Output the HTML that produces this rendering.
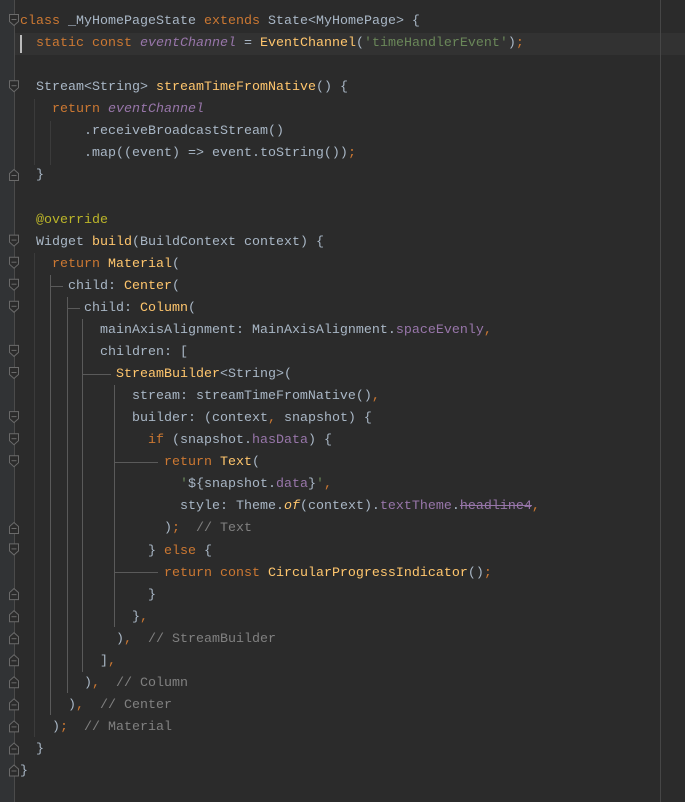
<!DOCTYPE html>
<html><head><meta charset="utf-8"><style>
html,body{margin:0;padding:0;}
body{width:685px;height:802px;background:#2b2b2b;position:relative;overflow:hidden;font-family:"Liberation Mono",monospace;font-size:13.33px;color:#a9b7c6;}
#gut{position:absolute;left:0;top:0;width:14px;height:802px;background:#313335;}
#sep{position:absolute;left:14px;top:0;width:1px;height:802px;background:#4b4b4b;}
#cur{position:absolute;left:15px;top:33px;width:670px;height:22px;background:#323232;}
#caret{position:absolute;left:20px;top:35px;width:2px;height:18px;background:#bbbbbb;}
#margin{position:absolute;left:660px;top:0;width:1px;height:802px;background:#464646;}
pre{position:absolute;left:20px;top:11px;margin:0;font:inherit;line-height:22.06px;white-space:pre;}
.k{color:#cc7832}.f{color:#ffc66d}.p{color:#9876aa}.i{font-style:italic}.s{color:#6a8759}.c{color:#808080}.a{color:#bbb529}
.st{text-decoration:line-through}
.g{position:absolute;background:#5a5a5a;}
.gf{position:absolute;background:#3b3b3b;width:1px;}
svg{position:absolute;left:0;top:0;}
</style></head><body>
<div id="gut"></div><div id="sep"></div><div id="cur"></div><div id="margin"></div><div id="caret"></div>
<div class="gf" style="left:34px;top:99px;height:66px"></div>
<div class="gf" style="left:50px;top:121px;height:44px"></div>
<div class="gf" style="left:34px;top:253px;height:484px"></div>
<div class="g" style="left:50px;top:275px;width:1px;height:440px"></div>
<div class="g" style="left:50px;top:286px;width:13px;height:1px"></div>
<div class="g" style="left:67px;top:297px;width:1px;height:396px"></div>
<div class="g" style="left:67px;top:308px;width:13px;height:1px"></div>
<div class="g" style="left:82px;top:319px;width:1px;height:353px"></div>
<div class="g" style="left:82px;top:374px;width:29px;height:1px"></div>
<div class="g" style="left:114px;top:385px;width:1px;height:242px"></div>
<div class="g" style="left:114px;top:462px;width:44px;height:1px"></div>
<div class="g" style="left:114px;top:572px;width:44px;height:1px"></div>
<svg width="30" height="802" fill="#2b2b2b" stroke="#6a6a6a" stroke-width="1">
<g id="fs">
<path d="M9.5 14.5h9v7l-4.5 4l-4.5-4z"/><path d="M11.5 19.5h5"/>
</g>
<use href="#fs" y="66.2"/><use href="#fs" y="220.6"/><use href="#fs" y="242.7"/><use href="#fs" y="264.7"/><use href="#fs" y="286.8"/><use href="#fs" y="330.9"/><use href="#fs" y="353"/><use href="#fs" y="397.1"/><use href="#fs" y="419.2"/><use href="#fs" y="441.2"/><use href="#fs" y="529.4"/>
<g id="fe">
<path d="M9.5 173.5l4.5-4l4.5 4v7h-9z"/><path d="M11.5 175.5h5"/>
</g>
<use href="#fe" y="353"/><use href="#fe" y="419.1"/><use href="#fe" y="441.2"/><use href="#fe" y="463.2"/><use href="#fe" y="485.3"/><use href="#fe" y="507.3"/><use href="#fe" y="529.4"/><use href="#fe" y="551.4"/><use href="#fe" y="573.5"/><use href="#fe" y="595.5"/>
</svg>
<pre><span class="k">class</span> _MyHomePageState <span class="k">extends</span> State&lt;MyHomePage&gt; {
  <span class="k">static const</span> <span class="p i">eventChannel</span> = <span class="f">EventChannel</span>(<span class="s">'timeHandlerEvent'</span>)<span class="k">;</span>

  Stream&lt;String&gt; <span class="f">streamTimeFromNative</span>() {
    <span class="k">return</span> <span class="p i">eventChannel</span>
        .receiveBroadcastStream()
        .map((event) =&gt; event.toString())<span class="k">;</span>
  }

  <span class="a">@override</span>
  Widget <span class="f">build</span>(BuildContext context) {
    <span class="k">return</span> <span class="f">Material</span>(
      child: <span class="f">Center</span>(
        child: <span class="f">Column</span>(
          mainAxisAlignment: MainAxisAlignment.<span class="p">spaceEvenly</span><span class="k">,</span>
          children: [
            <span class="f">StreamBuilder</span>&lt;String&gt;(
              stream: streamTimeFromNative()<span class="k">,</span>
              builder: (context<span class="k">,</span> snapshot) {
                <span class="k">if</span> (snapshot.<span class="p">hasData</span>) {
                  <span class="k">return</span> <span class="f">Text</span>(
                    <span class="s">'</span>${snapshot.<span class="p">data</span>}<span class="s">'</span><span class="k">,</span>
                    style: Theme.<span class="f i">of</span>(context).<span class="p">textTheme</span>.<span class="p st">headline4</span><span class="k">,</span>
                  )<span class="k">;</span>  <span class="c">// Text</span>
                } <span class="k">else</span> {
                  <span class="k">return const</span> <span class="f">CircularProgressIndicator</span>()<span class="k">;</span>
                }
              }<span class="k">,</span>
            )<span class="k">,</span>  <span class="c">// StreamBuilder</span>
          ]<span class="k">,</span>
        )<span class="k">,</span>  <span class="c">// Column</span>
      )<span class="k">,</span>  <span class="c">// Center</span>
    )<span class="k">;</span>  <span class="c">// Material</span>
  }
}</pre>
</body></html>
